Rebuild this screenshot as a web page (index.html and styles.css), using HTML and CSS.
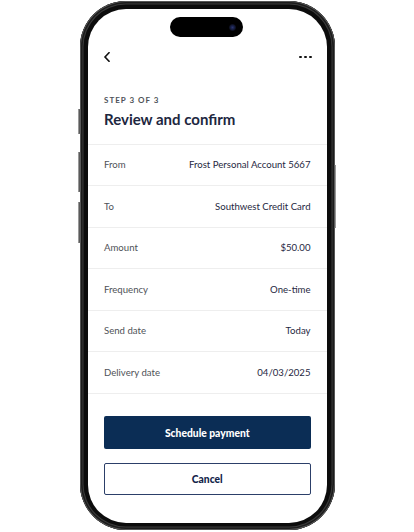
FILE: index.html
```html
<!DOCTYPE html>
<html>
<head>
<meta charset="utf-8">
<link rel="stylesheet" href="styles.css">
</head>
<body>
<div class="stage">
  <div class="phone">
    <span class="side-btn action"></span>
    <span class="side-btn vol-up"></span>
    <span class="side-btn vol-down"></span>
    <span class="side-btn power"></span>
    <div class="screen">
      <div class="island"><span class="camera"></span></div>
      <div class="status"></div>
      <div class="nav">
        <svg class="back" width="8" height="10" viewBox="0 0 8 10"><path d="M6 0.8 L2 5 L6 9.2" fill="none" stroke="#111" stroke-width="1.6" stroke-linecap="square"/></svg>
        <div class="more"><span></span><span></span><span></span></div>
      </div>
      <div class="header">
        <div class="step">STEP 3 OF 3</div>
        <h1 class="title">Review and confirm</h1>
      </div>
      <div class="rows">
        <div class="row"><span class="label">From</span><span class="value">Frost Personal Account 5667</span></div>
        <div class="row"><span class="label">To</span><span class="value">Southwest Credit Card</span></div>
        <div class="row"><span class="label">Amount</span><span class="value">$50.00</span></div>
        <div class="row"><span class="label">Frequency</span><span class="value">One-time</span></div>
        <div class="row"><span class="label">Send date</span><span class="value">Today</span></div>
        <div class="row"><span class="label">Delivery date</span><span class="value">04/03/2025</span></div>
      </div>
      <div class="actions">
        <button class="btn primary">Schedule payment</button>
        <button class="btn secondary">Cancel</button>
      </div>
    </div>
  </div>
</div>
</body>
</html>
```
FILE: styles.css
```css
* { box-sizing: border-box; }
html, body { margin: 0; padding: 0; background: #ffffff; }
body { width: 414px; height: 532px; overflow: hidden; font-family: Lato, "Open Sans", Arial, sans-serif; }

.stage { display: flex; justify-content: center; padding-top: 1px; }

.phone {
  position: relative;
  width: 255px;
  height: 529px;
  border-radius: 46px;
  background: #0c0c0c;
  padding: 8px 8px 7px 8.5px;
  box-shadow: inset 0 0 0 1px #555555, inset 0 0 0 2.5px #1c1c1c, inset 0 0 0 3.5px #3a3a3a;
}

.side-btn { position: absolute; width: 2.5px; background: #5a5a5a; border-radius: 1px; box-shadow: inset 1px 0 0 #999; }
.action { left: -1.5px; top: 108px; height: 25px; }
.vol-up { left: -1.5px; top: 151px; height: 40px; }
.vol-down { left: -1.5px; top: 201px; height: 41px; }
.power { right: -1.5px; top: 164px; height: 63px; box-shadow: inset -1px 0 0 #999; }

.screen {
  position: relative;
  height: 100%;
  background: #ffffff;
  border-radius: 38px;
  overflow: hidden;
  display: flex;
  flex-direction: column;
}

.island {
  position: absolute;
  left: 82px;
  top: 8px;
  width: 73px;
  height: 20px;
  border-radius: 10px;
  background: #000;
}
.camera {
  position: absolute;
  right: 7px;
  top: 6.5px;
  width: 7px;
  height: 7px;
  border-radius: 50%;
  background: radial-gradient(circle at 50% 50%, #2a3570 0, #141a3a 45%, #060608 80%);
}

.status { height: 36px; flex: none; }

.nav {
  height: 24px;
  flex: none;
  display: flex;
  align-items: center;
  justify-content: space-between;
  padding: 0 15px 0 16px;
}
.back { display: block; margin-left: -1px; }
.more { display: flex; gap: 2.5px; }
.more span { width: 2.5px; height: 2.5px; border-radius: 50%; background: #111; }

.header {
  padding: 25px 16px 14.5px;
  border-bottom: 1px solid #eeeeee;
}
.step {
  font-size: 8px;
  line-height: 12px;
  letter-spacing: 1px;
  color: #4e5359;
  font-weight: 700;
}
.title {
  margin: 3px 0 0;
  font-size: 15px;
  line-height: 20px;
  font-weight: 700;
  color: #1d2740;
}

.row {
  height: 41.5px;
  border-bottom: 1px solid #eeeeee;
  display: flex;
  align-items: center;
  justify-content: space-between;
  padding: 0 16px;
  font-size: 9.6px;
}
.label { color: #4f5258; }
.value { color: #1f2842; }

.actions {
  display: flex;
  flex-direction: column;
  gap: 14px;
  padding: 22.5px 16px 0;
}
.btn {
  height: 33px;
  border-radius: 2px;
  font-family: Lato, Arial, sans-serif;
  font-size: 10.3px;
  font-weight: 900;
  cursor: pointer;
}
.primary { background: #0b2d55; color: #ffffff; border: none; }
.secondary { height: 32px; background: #ffffff; color: #12244a; border: 1.5px solid #2c3f69; }
```
